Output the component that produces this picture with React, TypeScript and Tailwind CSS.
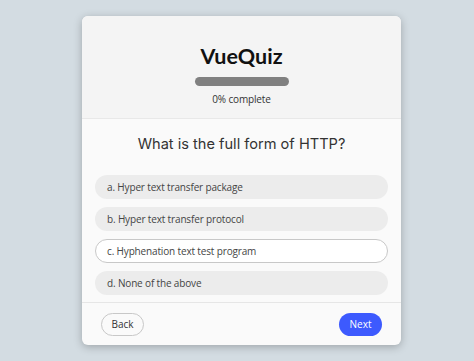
const options = [
  'a. Hyper text transfer package',
  'b. Hyper text transfer protocol',
  'c. Hyphenation text test program',
  'd. None of the above',
];

export default function App() {
  const selected = 2;
  return (
    <div className="min-h-[361px] w-[474px] bg-[#d3dce2] pl-[82px] pt-[16px] font-['Open_Sans',sans-serif]">
      <div className="w-[319px] h-[329px] overflow-hidden rounded-md bg-[#fafafa] shadow-[0_2px_8px_rgba(0,0,0,0.25)] flex flex-col">
        <div className="h-[103px] shrink-0 bg-[#f4f4f4] border-b border-[#e8e8e8] flex flex-col items-center pt-[27px]">
          <h1 className="text-[21.5px] leading-[26px] font-bold text-[#111] font-['Lato',sans-serif]">
            VueQuiz
          </h1>
          <div className="mt-[8px] h-[9px] w-[94px] rounded-full bg-[#808080]" />
          <p className="mt-[6px] text-[10px] leading-[14px] tracking-[-0.15px] text-[#333]">0% complete</p>
        </div>
        <div className="flex-1 flex flex-col px-[13px]">
          <p className="mt-[15px] text-center text-[14.6px] leading-[20px] text-[#333] font-['Inter',sans-serif]">
            What is the full form of HTTP?
          </p>
          <div className="mt-[21px] flex flex-col gap-[8px]">
            {options.map((o, i) => (
              <div
                key={o}
                className={
                  i === selected
                    ? 'h-[24px] rounded-full border border-[#c8c8c8] bg-white pl-[11px] flex items-center text-[10px] tracking-[-0.15px] text-[#444]'
                    : 'h-[24px] rounded-full border border-transparent bg-[#ececec] pl-[11px] flex items-center text-[10px] tracking-[-0.15px] text-[#444]'
                }
              >
                {o}
              </div>
            ))}
          </div>
        </div>
        <div className="h-[43px] shrink-0 border-t border-[#e6e6e6] flex items-start justify-between px-[19px] pt-[10px]">
          <button className="h-[23px] w-[43px] rounded-full border border-[#c8c8c8] bg-[#fafafa] text-[10px] text-[#333]">
            Back
          </button>
          <button className="h-[23px] w-[43px] rounded-full bg-[#3d5afe] text-[10px] text-white">
            Next
          </button>
        </div>
      </div>
    </div>
  );
}
